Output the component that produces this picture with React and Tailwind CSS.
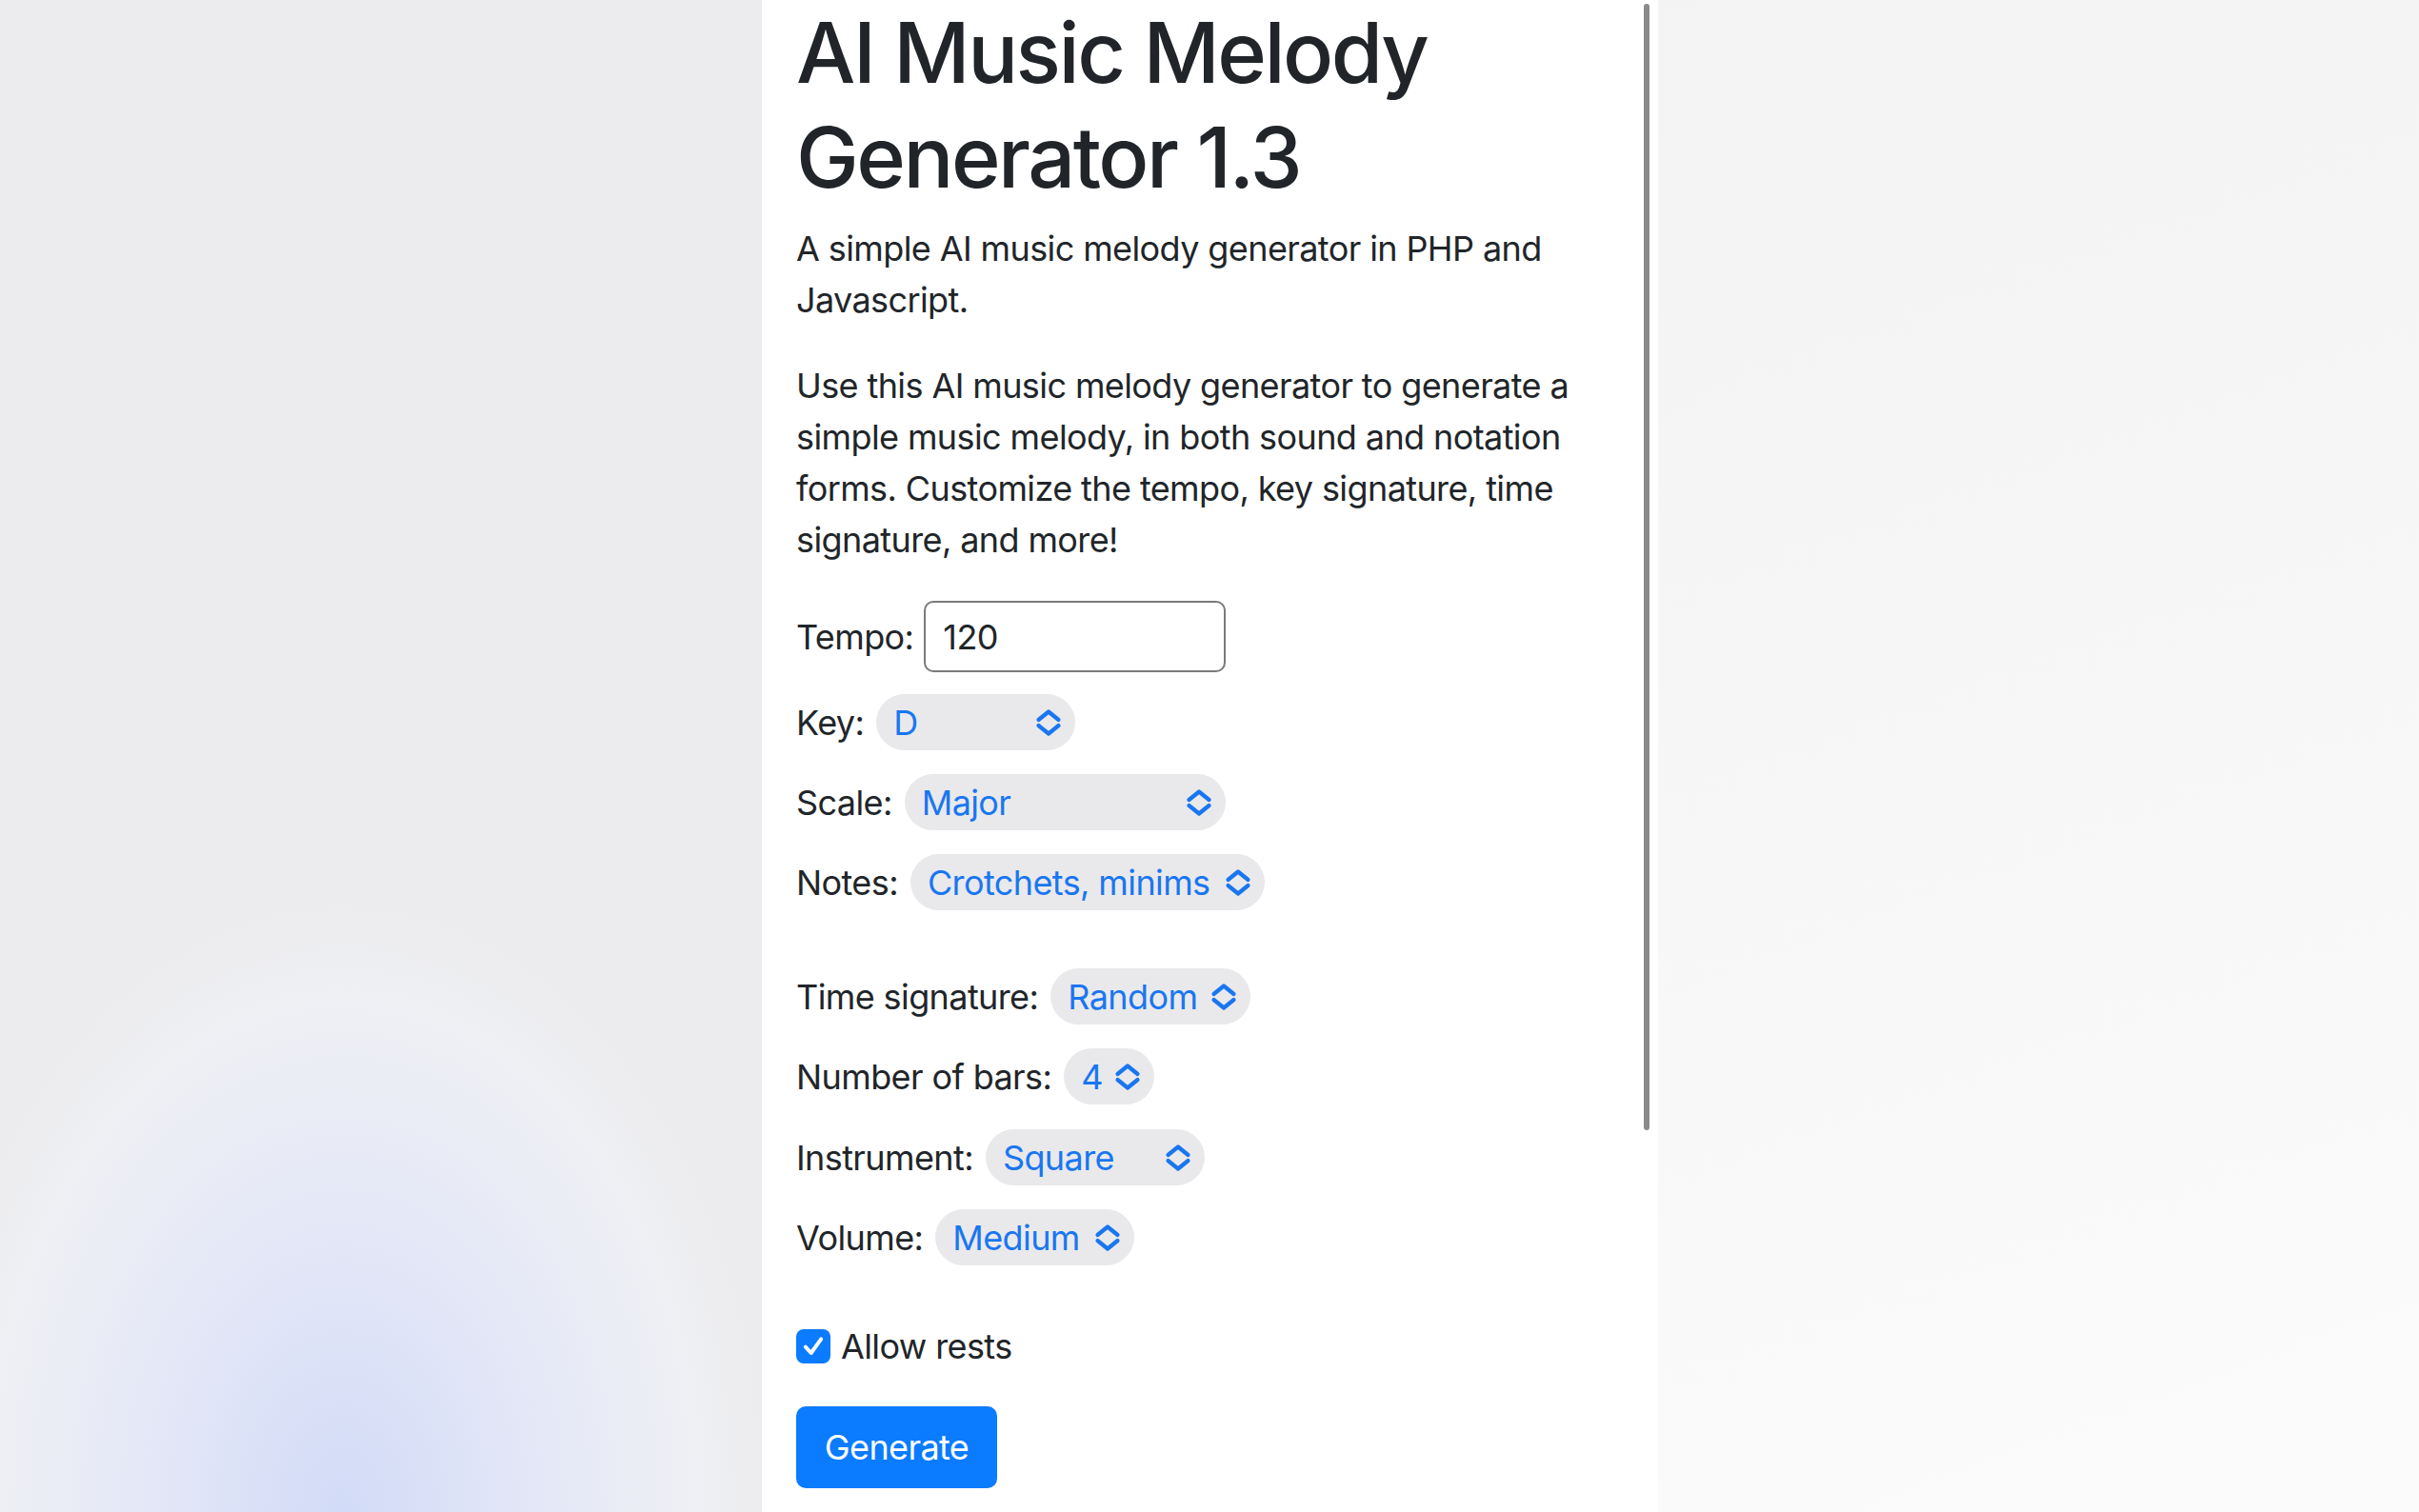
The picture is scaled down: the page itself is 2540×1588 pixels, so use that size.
import React from "react";

const font = { fontFamily: "Inter, 'Noto Sans', sans-serif" };

const Chevrons = () => (
  <svg width="28" height="30" viewBox="0 0 28 30" fill="none" stroke="#1a76f0" strokeWidth="4.2" strokeLinecap="round" strokeLinejoin="round">
    <path d="M3.5 12 L14 3.5 L24.5 12" />
    <path d="M3.5 18 L14 26.5 L24.5 18" />
  </svg>
);

const selects = [
  { label: "Key:", value: "D", width: "w-[209px]", mt: "mt-[23px]" },
  { label: "Scale:", value: "Major", width: "w-[337px]", mt: "mt-[25px]" },
  { label: "Notes:", value: "Crotchets, minims", width: "w-[372px]", mt: "mt-[25px]" },
  { label: "Time signature:", value: "Random", width: "w-[210px]", mt: "mt-[61px]" },
  { label: "Number of bars:", value: "4", width: "w-[95px]", mt: "mt-[25px]" },
  { label: "Instrument:", value: "Square", width: "w-[230px]", mt: "mt-[26px]" },
  { label: "Volume:", value: "Medium", width: "w-[209px]", mt: "mt-[25px]" },
];

const SelectRow = ({ label, value, width, mt }) => (
  <div className={`flex items-center gap-[13px] ${mt}`}>
    <span>{label}</span>
    <div className={`${width} h-[59px] rounded-[30px] bg-[#e9e9eb] flex items-center justify-between pl-[18px] pr-[14px] text-[#1a76f0]`}>
      <span className="whitespace-nowrap">{value}</span>
      <Chevrons />
    </div>
  </div>
);

export default function App() {
  return (
    <div className="w-full h-[1588px] flex overflow-hidden" style={font}>
      {/* left backdrop */}
      <div className="w-[800px] h-full bg-[radial-gradient(ellipse_55%_40%_at_45%_100%,#d2dbf7_0%,#e3e7f7_45%,#eff0f4_85%,#ececee_100%)]" />

      {/* page */}
      <div className="relative w-[941px] h-full bg-white text-[#212529] text-[36px] leading-[54px] pl-[36px] pr-[36px]">
        <h1 className="text-[88px] leading-[110px] font-medium tracking-[-2.5px]">
          AI Music Melody Generator 1.3
        </h1>
        <p className="mt-[14px] tracking-[-0.6px]">A simple AI music melody generator in PHP and Javascript.</p>
        <p className="mt-[36px] tracking-[-0.6px]">
          Use this AI music melody generator to generate a simple music melody, in both sound and notation forms. Customize the tempo, key signature, time signature, and more!
        </p>

        <div className="mt-[37px] flex flex-col tracking-[-0.6px]">
          <div className="flex items-center gap-[11px] h-[75px]">
            <span>Tempo:</span>
            <div className="w-[317px] h-[75px] border-[2.5px] border-[#7a7a7a] rounded-[10px] flex items-center pl-[18px]">
              120
            </div>
          </div>

          {selects.map((s) => (
            <SelectRow key={s.label} {...s} />
          ))}

          <div className="mt-[58px] flex items-center gap-[11px] h-[54px]">
            <div className="w-[36px] h-[36px] rounded-[8px] bg-[#0b7bff] flex items-center justify-center">
              <svg width="28" height="28" viewBox="0 0 24 24" fill="none" stroke="white" strokeWidth="3.4" strokeLinecap="round" strokeLinejoin="round">
                <path d="M5 12.5 L10 18 L19 5.5" />
              </svg>
            </div>
            <span>Allow rests</span>
          </div>

          <button className="mt-[36px] w-[211px] h-[86px] rounded-[10px] bg-[#0b7bff] text-white text-[36px]">
            Generate
          </button>
        </div>

        {/* scrollbar */}
        <div className="absolute right-[9px] top-[4px] w-[6px] h-[1183px] rounded-full bg-[#8a8a8a]" />
      </div>

      {/* right backdrop */}
      <div className="flex-1 h-full bg-[linear-gradient(160deg,#f3f3f3_0%,#f7f7f7_50%,#fbfbfb_100%)]" />
    </div>
  );
}
